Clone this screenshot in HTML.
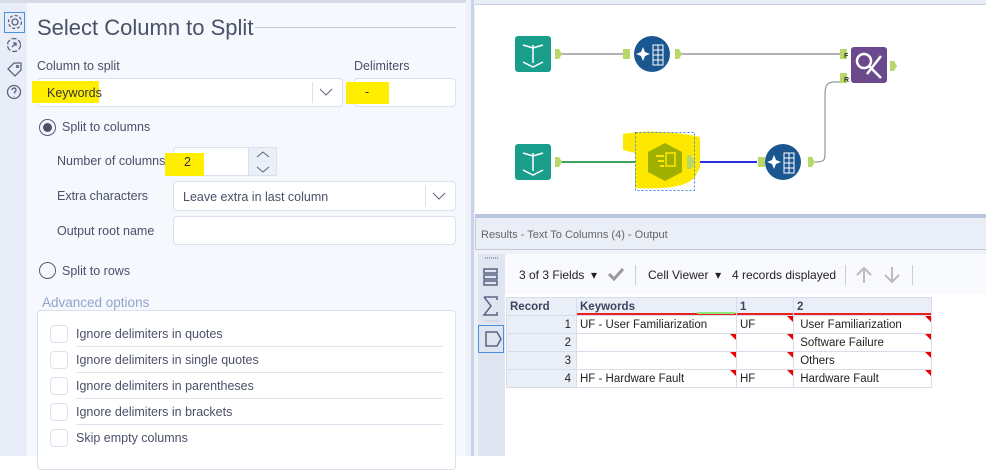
<!DOCTYPE html><html><head><style>
*{margin:0;padding:0;box-sizing:border-box}
body{width:986px;height:456px;overflow:hidden;background:#fff;font-family:"Liberation Sans",sans-serif;position:relative;color:#3f4560}
.a{position:absolute}
.t{position:absolute;font-size:12.5px;color:#4a5068;white-space:nowrap}
.in{position:absolute;background:#fff;border:1px solid #d9e0ee;border-radius:4px}
.hl{position:absolute;background:#ffee00}
.cb{position:absolute;left:50px;width:18px;height:18px;border:1px solid #dbe2ef;border-radius:4px;background:#fff}
.sep{position:absolute;left:76px;width:367px;height:1px;background:#dde3ef}
td{border:1px solid #d7deea;font-size:11.5px;height:18px;padding:0 3px;color:#222;position:relative}
.r{background:#e9eef7;text-align:right;padding-right:5px}
th{background:#e9eef7;text-align:left;font-size:11.5px;height:18px;padding:0 3px;border:1px solid #d7deea}
.tri::after{content:"";position:absolute;right:0;top:0;border-top:6px solid #e00;border-left:6px solid transparent}
</style></head><body>
<div class="a" style="left:0;top:0;width:27px;height:456px;background:#e8edf7"></div>
<div class="a" style="left:0;top:0;width:475px;height:3px;background:#d6dbe6"></div>
<div class="a" style="left:4px;top:12px;width:21px;height:21px;border:1px solid #4a8fe0"></div>
<svg class="a" style="left:5px;top:13px" width="20" height="90" viewBox="0 0 20 90" fill="none" stroke="#5b6382" stroke-width="1.3">
<circle cx="10" cy="9" r="3"/><circle cx="10" cy="9" r="6.5" stroke-dasharray="3 2"/>
<circle cx="9" cy="32" r="6.5" stroke-dasharray="5 2"/><path d="M7 34l4-4M8 30h3v3"/>
<path d="M3 56l6-6h7v7l-6 6z"/><circle cx="12.5" cy="53.5" r="1"/>
<circle cx="9" cy="79" r="6.5"/><path d="M7 77a2 2 0 1 1 2.5 2v1.5M9 83v.5"/>
</svg>
<div class="a" style="left:27px;top:3px;width:439px;height:453px;background:#f5f8fd"></div>
<div class="a" style="left:466px;top:0;width:9px;height:456px;background:#eef1f8"></div>
<div class="a" style="left:471px;top:0;width:3px;height:456px;background:#c8d2e8"></div>
<div class="t" style="left:37px;top:15px;font-size:22px;color:#4a5068">Select Column to Split</div>
<div class="a" style="left:255px;top:27px;width:201px;height:1px;background:#c5cad6"></div>
<div class="t" style="left:37px;top:59px">Column to split</div>
<div class="t" style="left:354px;top:59px">Delimiters</div>
<div class="in" style="left:37px;top:78px;width:306px;height:29px"></div>
<div class="a" style="left:312px;top:82px;width:1px;height:21px;background:#d9e0ee"></div>
<svg class="a" style="left:319px;top:88px" width="14" height="9"><path d="M1 1l6 6 6-6" stroke="#5b6382" fill="none"/></svg>
<div class="hl" style="left:32px;top:81px;width:67px;height:22px"></div>
<div class="t" style="left:47px;top:86px;color:#333">Keywords</div>
<div class="in" style="left:354px;top:78px;width:102px;height:29px"></div>
<div class="hl" style="left:346px;top:82px;width:43px;height:22px"></div>
<div class="t" style="left:365px;top:85px;color:#333">-</div>
<div class="a" style="left:39px;top:119px;width:17px;height:17px;border:1px solid #555c75;border-radius:50%"></div>
<div class="a" style="left:43px;top:123px;width:9px;height:9px;background:#4a5068;border-radius:50%"></div>
<div class="t" style="left:62px;top:120px">Split to columns</div>
<div class="t" style="left:57px;top:154px">Number of columns</div>
<div class="in" style="left:173px;top:147px;width:104px;height:29px"></div>
<div class="a" style="left:248px;top:147px;width:29px;height:29px;background:#eaeff8;border:1px solid #d9e0ee"></div>
<svg class="a" style="left:255px;top:150px" width="16" height="24" fill="none" stroke="#5b6382"><path d="M2 7l6-5 6 5M2 17l6 5 6-5"/></svg>
<div class="hl" style="left:165px;top:153px;width:39px;height:23px"></div>
<div class="t" style="left:184px;top:155px;color:#333">2</div>
<div class="t" style="left:57px;top:189px">Extra characters</div>
<div class="in" style="left:173px;top:181px;width:283px;height:30px"></div>
<div class="a" style="left:425px;top:185px;width:1px;height:22px;background:#d9e0ee"></div>
<svg class="a" style="left:432px;top:192px" width="14" height="9"><path d="M1 1l6 6 6-6" stroke="#5b6382" fill="none"/></svg>
<div class="t" style="left:183px;top:190px">Leave extra in last column</div>
<div class="t" style="left:57px;top:224px">Output root name</div>
<div class="in" style="left:173px;top:216px;width:283px;height:29px"></div>
<div class="a" style="left:39px;top:262px;width:17px;height:17px;border:1px solid #555c75;border-radius:50%"></div>
<div class="t" style="left:62px;top:264px">Split to rows</div>
<div class="t" style="left:42px;top:295px;font-size:13.5px;color:#94a3cb">Advanced options</div>
<div class="in" style="left:37px;top:310px;width:419px;height:160px"></div>
<div class="cb" style="top:325px"></div><div class="t" style="left:76px;top:327px">Ignore delimiters in quotes</div><div class="sep" style="top:346px"></div>
<div class="cb" style="top:351px"></div><div class="t" style="left:76px;top:353px">Ignore delimiters in single quotes</div><div class="sep" style="top:372px"></div>
<div class="cb" style="top:377px"></div><div class="t" style="left:76px;top:379px">Ignore delimiters in parentheses</div><div class="sep" style="top:398px"></div>
<div class="cb" style="top:403px"></div><div class="t" style="left:76px;top:405px">Ignore delimiters in brackets</div><div class="sep" style="top:424px"></div>
<div class="cb" style="top:429px"></div><div class="t" style="left:76px;top:431px">Skip empty columns</div>
<div class="a" style="left:475px;top:0;width:511px;height:5px;background:#e8edf7;border-bottom:1px solid #c8d2e8"></div>
<div class="a" style="left:475px;top:214px;width:511px;height:4px;background:#b9c6e0"></div>
<svg class="a" style="left:475px;top:5px" width="511" height="209">
<path d="M84 49H152M206 49H370" stroke="#999" stroke-width="1.5"/>
<path d="M340 157c10 0 10-2 10-10V90c0-10 2-13 10-13h10" stroke="#999" fill="none" stroke-width="1.2"/>
<path d="M84 157H165" stroke="#3da35a" stroke-width="2"/>
<path d="M220 157H282" stroke="#2630e0" stroke-width="2"/>
<g fill="#1a9e8c"><rect x="40" y="31" width="36" height="36" rx="3"/><rect x="40" y="139" width="36" height="36" rx="3"/></g>
<g stroke="#fff" fill="none" stroke-width="1.5"><path d="M48 57l10 5 10-5M58 40v18M48 40l10 3 10-3"/><path d="M48 165l10 5 10-5M58 148v18M48 148l10 3 10-3"/></g>
<g fill="#b8d86a"><path d="M80 44h4l3 5-3 5h-4z"/><path d="M80 152h4l3 5-3 5h-4z"/><path d="M148 44h7v10h-7z"/><path d="M200 44h4l3 5-3 5h-4z"/><path d="M365 44h7v10h-7z"/><path d="M365 68h7v10h-7z"/><path d="M415 56h4l3 5-3 5h-4z"/><path d="M283 152h7v10h-7z"/><path d="M333 152h4l3 5-3 5h-4z"/></g>
<circle cx="177" cy="49" r="18" fill="#1a5690"/><circle cx="308" cy="157" r="18" fill="#1a5690"/>
<g stroke="#fff" fill="none"><path d="M178 40h10v20h-10zM178 45h10M178 50h10M178 55h10M183 40v20"/><path d="M309 148h10v20h-10zM309 153h10M309 158h10M309 163h10M314 148v20"/></g>
<path d="M168 42l2 5 5 2-5 2-2 5-2-5-5-2 5-2z" fill="#fff"/><path d="M299 150l2 5 5 2-5 2-2 5-2-5-5-2 5-2z" fill="#fff"/>
<rect x="376" y="42" width="36" height="36" rx="3" fill="#6a4a8c"/>
<circle cx="389" cy="56" r="7" stroke="#fff" stroke-width="2.5" fill="none"/><path d="M394 61l12 12M406 51l-14 18" stroke="#fff" stroke-width="2.5"/>
<text x="369" y="53" font-size="7" font-weight="bold" fill="#333" font-family="Liberation Sans">F</text>
<text x="369" y="77" font-size="7" font-weight="bold" fill="#333" font-family="Liberation Sans">R</text>
<path d="M148 129c20-4 50-3 77 3v30l-5 10c-10 12-40 12-60 11v-35l-12-3z" fill="#ffe800"/>
<path d="M190 138l17 9v20l-17 9-17-9v-20z" fill="#9fb000"/>
<g fill="#ffe800"><rect x="181" y="150" width="8" height="2"/><rect x="183" y="155" width="6" height="2"/><rect x="185" y="160" width="4" height="2"/><rect x="191" y="148" width="9" height="13" fill="none" stroke="#ffe800" stroke-width="1.5"/></g>
<path d="M212 150h4l4 7-4 7h-4z" fill="#b8d86a"/>
<rect x="160.5" y="127.5" width="59" height="58" fill="none" stroke="#3a8ce0" stroke-dasharray="2 2"/>
</svg>
<div class="a" style="left:475px;top:218px;width:511px;height:238px;background:#eef1f8"></div>
<div class="a" style="left:475px;top:219px;width:511px;height:31px;background:#eaeef7;border-left:1px solid #ccc;border-bottom:1px solid #c4c9d4"></div>
<div class="t" style="left:481px;top:229px;font-size:11px;color:#666">Results - Text To Columns (4) - Output</div>
<div class="a" style="left:478px;top:254px;width:27px;height:202px;background:#dfe5f1"></div>
<div class="a" style="left:505px;top:254px;width:481px;height:202px;background:#fff"></div>
<div class="a" style="left:505px;top:254px;width:481px;height:40px;background:#f8fafd"></div>
<svg class="a" style="left:478px;top:255px" width="27" height="100" fill="none" stroke="#5b6382" stroke-width="1.5">
<path d="M7 3h13" stroke-dasharray="1 1" stroke-width="1"/>
<rect x="6" y="14" width="13" height="4"/><rect x="6" y="20" width="13" height="4"/><rect x="6" y="26" width="13" height="4"/>
<path d="M6 42h13v3M6 42l7 9-7 9h13v-3"/>
<path d="M6 66h16" stroke="#c8cfdd" stroke-width="1"/>
<path d="M8 77h11l4 7-4 7h-11z"/>
</svg>
<div class="a" style="left:478px;top:325px;width:26px;height:28px;border:1px solid #4a8fe0"></div>
<div class="t" style="left:519px;top:268px;font-size:12px;color:#222">3 of 3 Fields &nbsp;▾</div>
<svg class="a" style="left:607px;top:267px" width="18" height="14"><path d="M2 7l5 5 9-10" stroke="#999" stroke-width="3" fill="none"/></svg>
<div class="a" style="left:635px;top:265px;width:1px;height:20px;background:#ccd"></div>
<div class="t" style="left:648px;top:268px;font-size:12px;color:#222">Cell Viewer &nbsp;▾</div>
<div class="t" style="left:732px;top:268px;font-size:12px;color:#222">4 records displayed</div>
<div class="a" style="left:845px;top:265px;width:1px;height:20px;background:#ccd"></div>
<svg class="a" style="left:853px;top:265px" width="50" height="20" fill="none" stroke="#bbb" stroke-width="2"><path d="M11 18V3M4 10l7-7 7 7M39 2v15M32 10l7 7 7-7"/></svg>
<div class="a" style="left:912px;top:265px;width:1px;height:20px;background:#ccd"></div>
<table class="a" style="left:506px;top:297px;border-collapse:collapse;font-family:'Liberation Sans',sans-serif">
<tr><th style="width:70px">Record</th><th style="width:160px;box-shadow:inset 0 -2px 0 #e82020">Keywords</th><th style="width:57px;box-shadow:inset 0 -2px 0 #e82020">1</th><th style="width:138px;box-shadow:inset 0 -2px 0 #e82020">2</th></tr>
<tr><td class="r">1</td><td>UF - User Familiarization</td><td class="tri">UF</td><td class="tri">&nbsp;User Familiarization</td></tr>
<tr><td class="r">2</td><td class="tri"></td><td class="tri"></td><td class="tri">&nbsp;Software Failure</td></tr>
<tr><td class="r">3</td><td class="tri"></td><td class="tri"></td><td class="tri">&nbsp;Others</td></tr>
<tr><td class="r">4</td><td class="tri">HF - Hardware Fault</td><td class="tri">HF</td><td class="tri">&nbsp;Hardware Fault</td></tr>
</table>
<div class="a" style="left:697px;top:312px;width:38px;height:2px;background:#8ee87a"></div>
</body></html>
